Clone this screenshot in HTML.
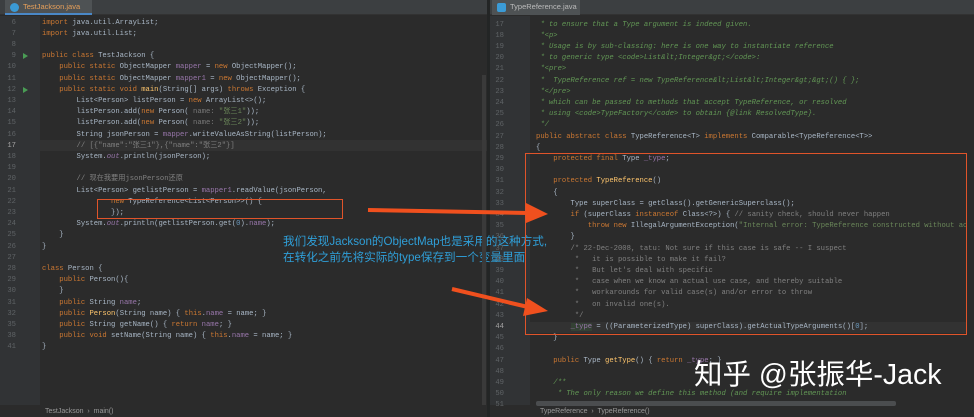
<!DOCTYPE html>
<html><head><meta charset="utf-8"><style>
*{margin:0;padding:0;box-sizing:border-box}
body{width:974px;height:417px;background:#2b2b2b;overflow:hidden;position:relative;font-family:"Liberation Mono","Noto Sans CJK SC",monospace;font-size:7.2px;color:#a9b7c6}
.abs{position:absolute}
.tabbar{top:0;height:15px;background:#3c3f41;border-bottom:1px solid #323232}
.tab{top:0;height:15px;font-family:"Liberation Sans",sans-serif;font-size:7.5px;line-height:14px;color:#bbb;padding-left:18px}
.gut{background:#313335;top:16px;bottom:12px}
.code{white-space:pre;line-height:11.2px}
.ln{white-space:pre;line-height:11.2px;text-align:right;color:#5f6366;width:16px}
.k{color:#cc7832}.s{color:#6a8759}.c{color:#808080}.d{color:#629755;font-style:italic}.f{color:#9876aa}.m{color:#ffc66d}.h{color:#787878}.i{color:#9876aa;font-style:italic}
.crumb{top:407px;height:10px;background:#2b2b2b;font-family:"Liberation Sans",sans-serif;font-size:7px;color:#999;line-height:10px}
</style></head><body>
<div class="abs tabbar" style="left:0;width:974px"></div>
<div class="abs tab" style="left:5px;width:87px;border-bottom:2px solid #4a88c7;background:#4e5254;color:#e8a05a">TestJackson.java</div>
<div class="abs" style="left:10px;top:3px;width:9px;height:9px;border-radius:50%;background:#3b9bd6"></div>
<div class="abs tab" style="left:492px;width:88px;background:#4e5254">TypeReference.java</div>
<div class="abs" style="left:497px;top:3px;width:9px;height:9px;border-radius:2px;background:#3b9bd6"></div>
<div class="abs" style="left:487px;top:0;width:3px;height:417px;background:#232525"></div>

<div class="abs gut" style="left:0;width:40px"></div>
<div class="abs gut" style="left:490px;width:40px"></div>

<div class="abs ln" style="left:0;top:17.5px">6
7
8
9
10
11
12
13
14
15
16
<span style="color:#a4a3a3">17</span>
18
19
20
21
22
23
24
25
26
27
28
29
30
31
32
35
38
41</div>
<div class="abs" style="left:23px;top:53px;width:0;height:0;border-left:5px solid #499c54;border-top:3px solid transparent;border-bottom:3px solid transparent"></div>
<div class="abs" style="left:23px;top:87px;width:0;height:0;border-left:5px solid #499c54;border-top:3px solid transparent;border-bottom:3px solid transparent"></div>
<div class="abs" style="left:40px;top:140px;width:447px;height:11px;background:#323232"></div>
<div class="abs code" style="left:42px;top:17.5px"><span class="k">import</span> java.util.ArrayList;
<span class="k">import</span> java.util.List;

<span class="k">public class</span> TestJackson {
    <span class="k">public static</span> ObjectMapper <span class="f">mapper</span> = <span class="k">new</span> ObjectMapper();
    <span class="k">public static</span> ObjectMapper <span class="f">mapper1</span> = <span class="k">new</span> ObjectMapper();
    <span class="k">public static void</span> <span class="m">main</span>(String[] args) <span class="k">throws</span> Exception {
        List&lt;Person&gt; listPerson = <span class="k">new</span> ArrayList&lt;&gt;();
        listPerson.add(<span class="k">new</span> Person( <span class="h">name:</span> <span class="s">"张三1"</span>));
        listPerson.add(<span class="k">new</span> Person( <span class="h">name:</span> <span class="s">"张三2"</span>));
        String jsonPerson = <span class="f">mapper</span>.writeValueAsString(listPerson);
        <span class="c">// [{"name":"张三1"},{"name":"张三2"}]</span>
        System.<span class="i">out</span>.println(jsonPerson);

        <span class="c">// 现在我要用jsonPerson还原</span>
        List&lt;Person&gt; getlistPerson = <span class="f">mapper1</span>.readValue(jsonPerson,
                <span class="k">new</span> TypeReference&lt;List&lt;Person&gt;&gt;() {
                });
        System.<span class="i">out</span>.println(getlistPerson.get(<span style="color:#6897bb">0</span>).<span class="f">name</span>);
    }
}

<span class="k">class</span> Person {
    <span class="k">public</span> Person(){
    }
    <span class="k">public</span> String <span class="f">name</span>;
    <span class="k">public</span> <span class="m">Person</span>(String name) { <span class="k">this</span>.<span class="f">name</span> = name; }
    <span class="k">public</span> String <span class="m" style="color:#a9b7c6">getName</span>() { <span class="k">return</span> <span class="f">name</span>; }
    <span class="k">public void</span> setName(String name) { <span class="k">this</span>.<span class="f">name</span> = name; }
}</div>
<div class="abs" style="left:97px;top:199px;width:246px;height:20px;border:1.5px solid #e0542a"></div>
<div class="abs" style="left:283px;top:234px;font-family:'Liberation Sans','Noto Sans CJK SC',sans-serif;font-size:11.6px;line-height:15.5px;color:#2f9fd8;white-space:nowrap">我们发现Jackson的ObjectMap也是采用的这种方式,<br>在转化之前先将实际的type保存到一个变量里面</div>
<div class="abs" style="left:482px;top:75px;width:4px;height:330px;background:#3a3a3a"></div>

<div class="abs ln" style="left:490px;top:19.5px;width:14px">17
18
19
20
21
22
23
24
25
26
27
28
29
30
31
32
33
34
35
36
37
38
39
40
41
42
43
<span style="color:#a4a3a3">44</span>
45
46
47
48
49
50
51</div>
<div class="abs" style="left:530px;top:322px;width:437px;height:11px;background:#323232"></div>
<div class="abs code" style="left:536px;top:19.5px"><span class="d"> * to ensure that a Type argument is indeed given.
 *&lt;p&gt;
 * Usage is by sub-classing: here is one way to instantiate reference
 * to generic type &lt;code&gt;List&amp;lt;Integer&amp;gt;&lt;/code&gt;:
 *&lt;pre&gt;
 *  TypeReference ref = new TypeReference&amp;lt;List&amp;lt;Integer&amp;gt;&amp;gt;() { };
 *&lt;/pre&gt;
 * which can be passed to methods that accept TypeReference, or resolved
 * using &lt;code&gt;TypeFactory&lt;/code&gt; to obtain {@link ResolvedType}.
 */</span>
<span class="k">public abstract class</span> TypeReference&lt;T&gt; <span class="k">implements</span> Comparable&lt;TypeReference&lt;T&gt;&gt;
{
    <span class="k">protected final</span> Type <span class="f">_type</span>;

    <span class="k">protected</span> <span class="m">TypeReference</span>()
    {
        Type superClass = getClass().getGenericSuperclass();
        <span class="k">if</span> (superClass <span class="k">instanceof</span> Class&lt;?&gt;) { <span class="c">// sanity check, should never happen</span>
            <span class="k">throw new</span> IllegalArgumentException(<span class="s">"Internal error: TypeReference constructed without ac</span>
        }
        <span class="c">/* 22-Dec-2008, tatu: Not sure if this case is safe -- I suspect
         *   it is possible to make it fail?
         *   But let's deal with specific
         *   case when we know an actual use case, and thereby suitable
         *   workarounds for valid case(s) and/or error to throw
         *   on invalid one(s).
         */</span>
        <span class="f" style="background:#344134">_type</span> = ((ParameterizedType) superClass).getActualTypeArguments()[<span style="color:#6897bb">0</span>];
    }

    <span class="k">public</span> Type <span class="m">getType</span>() { <span class="k">return</span> <span class="f">_type</span>; }

    <span class="d">/**
     * The only reason we define this method (and require implementation</span></div>
<div class="abs" style="left:525px;top:153px;width:442px;height:182px;border:1.5px solid #e0542a"></div>
<div class="abs" style="left:536px;top:401px;width:360px;height:5px;background:#4b4d4f;border-radius:2px"></div>

<svg class="abs" style="left:0;top:0" width="974" height="417">
<path d="M368 210 L528 213" stroke="#f0501e" stroke-width="4" fill="none"/>
<path d="M526 203 L548 214 L526 223 Z" fill="#f0501e"/>
<path d="M452 289 L528 307" stroke="#f0501e" stroke-width="4" fill="none"/>
<path d="M527 298 L548 311 L523 316 Z" fill="#f0501e"/>
</svg>

<div class="abs" style="left:694px;top:358px;font-family:'Liberation Sans','Noto Sans CJK SC',sans-serif;font-size:28.5px;color:#fff;line-height:34px;white-space:nowrap">知乎 @张振华-Jack</div>

<div class="abs crumb" style="left:0;width:487px;padding-left:45px">TestJackson &nbsp;›&nbsp; main()</div>
<div class="abs crumb" style="left:490px;width:484px;padding-left:50px">TypeReference &nbsp;›&nbsp; TypeReference()</div>
</body></html>
